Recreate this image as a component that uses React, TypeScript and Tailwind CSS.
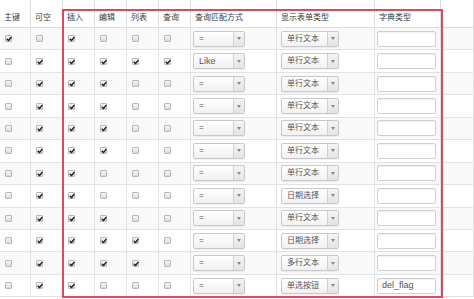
import React from "react";

type Row = {
  c: [boolean, boolean, boolean, boolean, boolean, boolean];
  match: string;
  form: string;
  dict: string;
};

const rows: Row[] = [
  { c: [true, false, true, false, false, false], match: "=", form: "单行文本", dict: "" },
  { c: [false, true, true, true, true, true], match: "Like", form: "单行文本", dict: "" },
  { c: [false, true, true, true, false, false], match: "=", form: "单行文本", dict: "" },
  { c: [false, true, true, true, false, false], match: "=", form: "单行文本", dict: "" },
  { c: [false, true, true, true, false, false], match: "=", form: "单行文本", dict: "" },
  { c: [false, true, true, true, false, false], match: "=", form: "单行文本", dict: "" },
  { c: [false, true, true, false, false, false], match: "=", form: "单行文本", dict: "" },
  { c: [false, true, true, false, false, false], match: "=", form: "日期选择", dict: "" },
  { c: [false, true, true, true, false, false], match: "=", form: "单行文本", dict: "" },
  { c: [false, true, true, true, true, false], match: "=", form: "日期选择", dict: "" },
  { c: [false, true, true, true, true, false], match: "=", form: "多行文本", dict: "" },
  { c: [false, true, true, false, false, false], match: "=", form: "单选按钮", dict: "del_flag" },
];

const headers = ["主键", "可空", "插入", "编辑", "列表", "查询", "查询匹配方式", "显示表单类型", "字典类型", ""];

const font = { fontFamily: "'Liberation Sans', 'Noto Sans CJK SC', sans-serif" };

function Check({ on }: { on: boolean }) {
  return (
    <div className="relative w-[7px] h-[7px] rounded-[1px] border border-[#b8b8b8] bg-gradient-to-b from-[#f6f6f6] to-[#dcdcdc]">
      {on && (
        <svg className="absolute left-[-1px] top-[-1px]" width="8" height="8" viewBox="0 0 8 8">
          <path d="M2.2 4.3 L3.5 5.6 L6 2.4" fill="none" stroke="#1a1a1a" strokeWidth="1.4" strokeLinecap="round" strokeLinejoin="round" />
        </svg>
      )}
    </div>
  );
}

function Select({ value, w }: { value: string; w: string }) {
  const latin = /^[A-Za-z]/.test(value);
  return (
    <div className={`flex h-[16px] ${w} rounded-[2px] border border-[#c8c8c8] bg-gradient-to-b from-white to-[#f1f1f1] shadow-[0_1px_1px_rgba(0,0,0,0.06)]`}>
      <div className={`flex-1 flex items-center pl-[5px] ${latin ? "text-[9px]" : "text-[8px]"} text-[#555] leading-none`}>{value}</div>
      <div className="w-[11px] flex items-center justify-center border-l border-[#d0d0d0] bg-gradient-to-b from-[#f4f4f4] to-[#e4e4e4] rounded-r-[2px]">
        <svg width="4" height="3" viewBox="0 0 4 3">
          <path d="M0 0 L4 0 L2 3 Z" fill="#8a8a8a" />
        </svg>
      </div>
    </div>
  );
}

const cell = "border-r border-b border-[#e2e2e2] flex items-center h-[22.45px]";

export default function App() {
  return (
    <div className="relative w-[474px] h-[299px] overflow-hidden bg-white" style={font}>
      <div className="grid grid-cols-[31px_32px_32px_32px_32px_32px_86px_98px_66px_1fr]">
        {headers.map((h, i) => (
          <div
            key={i}
            className="h-[28px] border-r border-b border-[#dcdcdc] flex items-end pb-[5px] pl-[4px] text-[8px] leading-none text-[#3a3a3a]"
          >
            {h}
          </div>
        ))}
        {rows.map((r, ri) => {
          const bg = ri % 2 === 0 ? "bg-[#f9f9f9]" : "bg-white";
          return (
            <React.Fragment key={ri}>
              {r.c.map((v, ci) => (
                <div key={ci} className={`${cell} ${bg} pl-[5px]`}>
                  <Check on={v} />
                </div>
              ))}
              <div className={`${cell} ${bg} pl-[2px]`}>
                <Select value={r.match} w="w-[52px]" />
              </div>
              <div className={`${cell} ${bg} pl-[4px]`}>
                <Select value={r.form} w="w-[58px]" />
              </div>
              <div className={`${cell} ${bg} pl-[2px]`}>
                <div className="h-[16px] w-[59px] rounded-[2px] border border-[#cfcfcf] bg-white flex items-center pl-[4px] text-[9px] text-[#555] leading-none shadow-[inset_0_1px_1px_rgba(0,0,0,0.06)]">
                  {r.dict}
                </div>
              </div>
              <div className={`${cell} ${bg}`} />
            </React.Fragment>
          );
        })}
      </div>
      <div className="absolute left-[62px] top-[9px] w-[381px] h-[289px] border-2 border-[#dc4b5c] pointer-events-none" />
    </div>
  );
}
